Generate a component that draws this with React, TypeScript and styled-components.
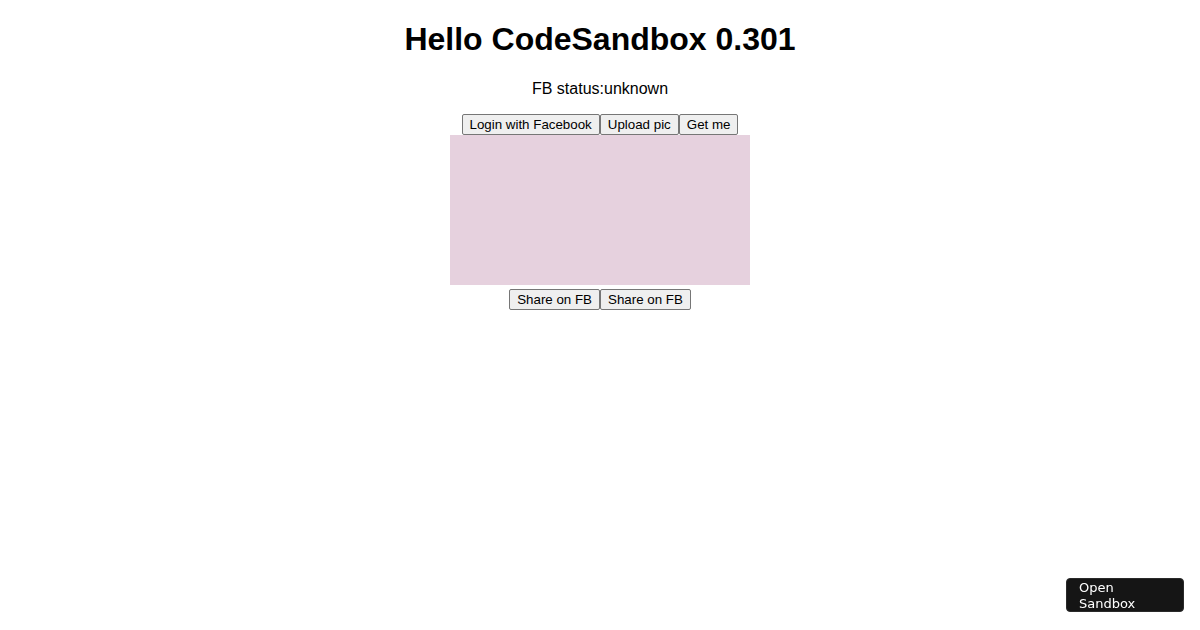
import { createGlobalStyle, styled } from "styled-components";

const GlobalStyle = createGlobalStyle`
  body {
    margin: 0 8px;
    background: #fff;
    font-family: "Liberation Sans", Arial, sans-serif;
  }
`;

const AppWrapper = styled.div`
  text-align: center;
  font-family: "Liberation Sans", Arial, sans-serif;
  color: #000;
  padding-top: 0.1px;
`;

const Title = styled.h1`
  font-size: 32px;
  margin: 21.34px 0 21.44px;
`;

const Status = styled.p`
  font-size: 16px;
  margin: 16px 0;
`;

const Row = styled.div``;

const Button = styled.button`
  font-family: "Liberation Sans", Arial, sans-serif;
  font-size: 13.333px;
  padding: 2px 7px;
  margin: 0;
  background: #efefef;
  color: #000;
  border: 1px solid #767676;
  border-radius: 2px;
  line-height: normal;
`;

const Canvas = styled.canvas`
  background: #e6d1de;
  width: 300px;
  height: 150px;
`;

const OpenSandbox = styled.a`
  position: fixed;
  right: 16px;
  bottom: 18px;
  box-sizing: border-box;
  width: 118px;
  height: 34px;
  padding: 1px 12px;
  background: #151515;
  border: 1px solid #2a2a2a;
  border-radius: 4px;
  color: #fff;
  font-family: "DejaVu Sans", Verdana, sans-serif;
  font-size: 13px;
  line-height: 16px;
  text-align: left;
  text-decoration: none;
`;

const App = () => {
  return (
    <>
      <GlobalStyle />
      <AppWrapper>
        <Title>Hello CodeSandbox 0.301</Title>
        <Status>FB status:unknown</Status>
        <Row>
          <Button>Login with Facebook</Button>
          <Button>Upload pic</Button>
          <Button>Get me</Button>
        </Row>
        <Row>
          <Canvas width={300} height={150} />
        </Row>
        <Row>
          <Button>Share on FB</Button>
          <Button>Share on FB</Button>
        </Row>
      </AppWrapper>
      <OpenSandbox href="#">Open Sandbox</OpenSandbox>
    </>
  );
};

export default App;
